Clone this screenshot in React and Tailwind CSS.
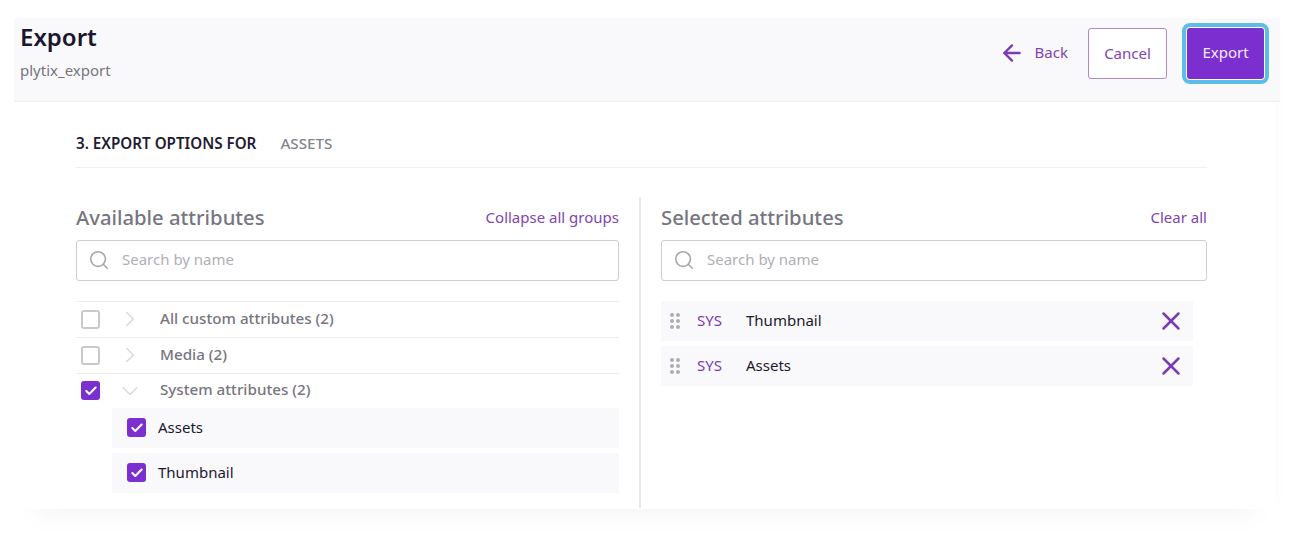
import { ArrowLeft, ChevronDown, ChevronRight, Search, X, Check } from 'lucide-react';

const font = { fontFamily: '"Noto Sans", sans-serif' };

const Box = ({ checked }) => (
  checked ? (
    <div className="w-[19px] h-[19px] rounded-[3px] bg-[#7b2fce] flex items-center justify-center shrink-0">
      <Check size={14} strokeWidth={3.5} className="text-white" />
    </div>
  ) : (
    <div className="w-[19px] h-[19px] rounded-[3px] border-2 border-[#c9c8cd] bg-white shrink-0" />
  )
);

const SearchBox = () => (
  <div className="h-[41px] border border-[#cfced3] rounded-[3px] flex items-center pl-[11px] gap-[12px] pb-[1px] bg-white">
    <Search size={22} strokeWidth={1.8} className="text-[#a8a7ad]" />
    <span className="text-[15px] text-[#b0afb5] pb-[2px]">Search by name</span>
  </div>
);

const Group = ({ label, checked, open }) => (
  <div className={`${open ? 'h-[35px]' : 'h-[36px]'} border-t border-[#ededf0] flex items-center pl-[5px] pb-[1px]`}>
    <Box checked={checked} />
    <div className="w-[60px] shrink-0">
      {open
        ? <ChevronDown size={28} strokeWidth={1.4} className="text-[#dcdbdf] ml-[16px]" />
        : <ChevronRight size={26} strokeWidth={1.6} className="text-[#dcdbdf] ml-[17px]" />}
    </div>
    <span className="text-[15.2px] font-medium text-[#77757f] pb-[2px]">{label}</span>
  </div>
);

const Child = ({ label }) => (
  <div className="h-[40px] ml-[36px] bg-[#f9f9fb] flex items-center pl-[15px] gap-[12px] pb-[1px]">
    <Box checked />
    <span className="text-[15px] text-[#1c1830]">{label}</span>
  </div>
);

const Selected = ({ label }) => (
  <div className="h-[40px] w-[532px] bg-[#f9f9fb] flex items-center pl-[9px] pr-[7px] pb-[1px]">
    <div className="grid grid-cols-2 gap-x-[2px] gap-y-[2px] w-[10px] shrink-0">
      {[0, 1, 2, 3, 4, 5].map(i => (
        <span key={i} className="w-[4px] h-[4px] rounded-full bg-[#aeadb3]" />
      ))}
    </div>
    <span className="text-[15px] text-[#7a3bb5] ml-[17px] w-[49px]">SYS</span>
    <span className="text-[15px] text-[#1c1830] flex-1 pb-[1px]">{label}</span>
    <X size={30} strokeWidth={2} className="text-[#7a3bb5]" />
  </div>
);

export default function App() {
  return (
    <div style={font} className="w-[1310px] h-[542px] bg-white overflow-hidden pt-[18px] pl-[14px]">
      <div className="w-[1262px] h-[491px] bg-white rounded-[4px] shadow-[0_26px_26px_-22px_rgba(30,20,60,0.05),6px_0_10px_-4px_rgba(30,20,60,0.02)]">
        {/* Header */}
        <div className="h-[84px] -mr-[4px] bg-[#f9f9fb] border-b border-[#efeff2] flex justify-between pl-[6px] pr-[16px]">
          <div className="pt-[1px]">
            <h1 className="text-[24px] leading-[36px] font-semibold text-[#1a1530]">Export</h1>
            <p className="text-[15px] leading-[20px] mt-[5px] text-[#77757f]">plytix_export</p>
          </div>
          <div className="flex items-center pb-[13px]">
            <ArrowLeft size={26} strokeWidth={2.2} className="text-[#7a3bb5]" />
            <span className="text-[15px] text-[#7f45b0] ml-[10px] pb-[2px]">Back</span>
            <button className="ml-[20px] w-[79px] h-[51px] border border-[#ab8cc9] rounded-[3px] bg-white text-[15px] text-[#7f45b0]">Cancel</button>
            <button className="ml-[20px] w-[77px] h-[51px] rounded-[3px] bg-[#7b2fce] text-[15px] text-[#f3e9fb] pb-[2px] outline-4 outline-offset-[1px] outline-[#5cbde6]">Export</button>
          </div>
        </div>

        {/* Content */}
        <div className="pl-[62px] pr-[69px]">
          <div className="h-[66px] border-b border-[#efeff2] flex items-center gap-[24px] pt-[17px]">
            <span className="text-[15.2px] font-semibold text-[#1f1b33]">3. EXPORT OPTIONS FOR</span>
            <span className="text-[15.2px] font-medium text-[#85838c]">ASSETS</span>
          </div>

          <div className="flex mt-[29px] h-[311px]">
            <div className="w-[543px] shrink-0">
              <div className="flex justify-between items-center h-[40px] mb-[3px]">
                <h2 className="text-[20.25px] font-medium text-[#77757f]">Available attributes</h2>
                <span className="text-[15px] text-[#7f45b0]">Collapse all groups</span>
              </div>
              <SearchBox />
              <div className="mt-[20px]">
                <Group label="All custom attributes (2)" />
                <Group label="Media (2)" />
                <Group label="System attributes (2)" checked open />
                <Child label="Assets" />
                <div className="h-[5px]" />
                <Child label="Thumbnail" />
              </div>
            </div>

            <div className="w-[2px] bg-[#e9e9ec] mx-[20px] shrink-0" />

            <div className="flex-1">
              <div className="flex justify-between items-center h-[40px] mb-[3px]">
                <h2 className="text-[20.25px] font-medium text-[#77757f]">Selected attributes</h2>
                <span className="text-[15px] text-[#7f45b0]">Clear all</span>
              </div>
              <SearchBox />
              <div className="mt-[20px] flex flex-col gap-[5px]">
                <Selected label="Thumbnail" />
                <Selected label="Assets" />
              </div>
            </div>
          </div>
        </div>
      </div>
    </div>
  );
}
